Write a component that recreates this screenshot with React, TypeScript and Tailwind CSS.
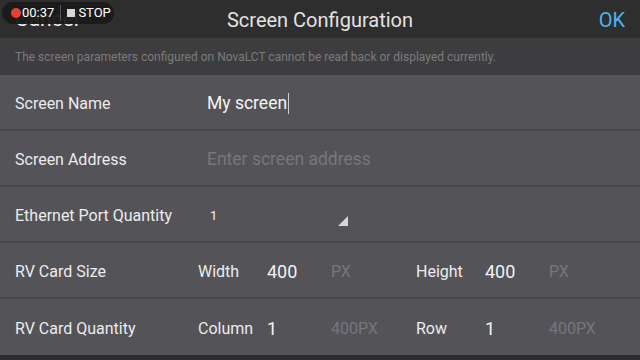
import React from "react";

const font = { fontFamily: "Roboto, 'Noto Sans', sans-serif" };

function Row({ children, last }: { children: React.ReactNode; last?: boolean }) {
  return (
    <div
      className={`flex h-[56px] items-center bg-[#535358] pt-[3px] ${
        last ? "" : "border-b-2 border-[#48484c]"
      }`}
    >
      {children}
    </div>
  );
}

function Pair({
  name,
  value,
  unit,
}: {
  name: string;
  value: string;
  unit: string;
}) {
  return (
    <>
      <div className="w-[69px] text-[16px] text-[#ececec]">{name}</div>
      <div className="w-[64px] text-[18px] text-[#f2f2f2]">{value}</div>
      <div className="w-[85px] text-[16px] text-[#77777b]">{unit}</div>
    </>
  );
}

export default function App() {
  return (
    <div className="relative h-[360px] w-[640px] overflow-hidden bg-[#2c2c2e]" style={font}>
      {/* Header */}
      <div className="relative flex h-[38px] items-center justify-between bg-[#2e2e2f] px-[15px] pt-[2px]">
        <span className="text-[21px] text-[#f0f0f0]">Cancel</span>
        <span className="absolute left-1/2 -translate-x-1/2 text-[20px] text-[#e2e2e2]">
          Screen Configuration
        </span>
        <span className="text-[20px] text-[#4db3ea]">OK</span>
      </div>

      {/* Info */}
      <div className="flex h-[37px] items-center bg-[#3d3d3f] px-[15px] text-[12px] text-[#7b7b7d]">
        The screen parameters configured on NovaLCT cannot be read back or displayed currently.
      </div>

      <Row>
        <div className="w-[207px] pl-[15px] text-[16px] text-[#ececec]">Screen Name</div>
        <div className="flex items-center text-[17.5px] text-[#f4f4f4]">
          My screen
          <span className="ml-[1px] h-[21px] w-[1px] bg-[#cfcfcf]" />
        </div>
      </Row>

      <Row>
        <div className="w-[207px] pl-[15px] text-[16px] text-[#ececec]">Screen Address</div>
        <div className="text-[17.5px] text-[#77777b]">Enter screen address</div>
      </Row>

      <Row>
        <div className="w-[207px] pl-[15px] text-[16px] text-[#ececec]">Ethernet Port Quantity</div>
        <div className="w-[131px] pl-[3px] text-[13px] text-[#f0f0f0]">1</div>
        <svg width="11" height="11" viewBox="0 0 11 11" className="mt-[12px]">
          <polygon points="10,0 10,10 0,10" fill="#d6d6d6" />
        </svg>
      </Row>

      <Row>
        <div className="w-[198px] pl-[15px] text-[16px] text-[#ececec]">RV Card Size</div>
        <Pair name="Width" value="400" unit="PX" />
        <Pair name="Height" value="400" unit="PX" />
      </Row>

      <Row last>
        <div className="w-[198px] pl-[15px] text-[16px] text-[#ececec]">RV Card Quantity</div>
        <Pair name="Column" value="1" unit="400PX" />
        <Pair name="Row" value="1" unit="400PX" />
      </Row>

      {/* Recording overlay */}
      <div className="absolute left-[2px] top-[2px] flex h-[22px] w-[112px] items-center rounded-full bg-[#1a1a1a]/95 pl-[9px] text-[13px] text-white">
        <span className="h-[10px] w-[10px] rounded-full bg-[#e8402f]" />
        <span className="ml-[1px]">00:37</span>
        <span className="mx-[6px] h-[16px] w-[1px] bg-[#555]" />
        <span className="h-[8px] w-[8px] bg-[#d8d8d8]" />
        <span className="ml-[3px]">STOP</span>
      </div>
    </div>
  );
}
